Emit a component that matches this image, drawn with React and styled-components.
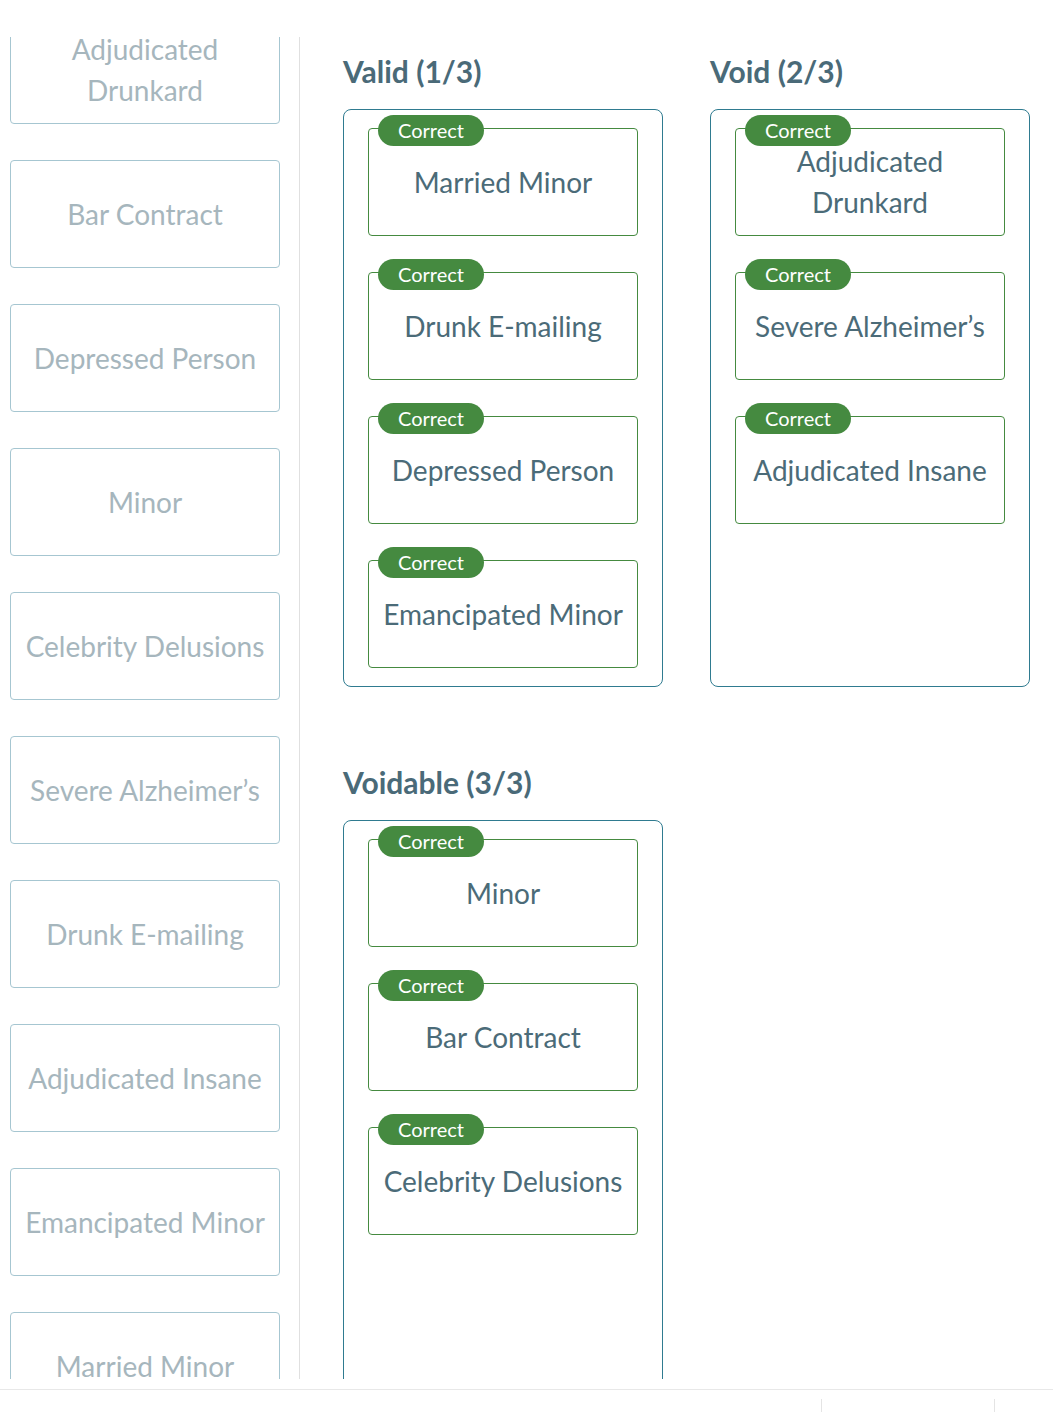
import React, { useLayoutEffect, useRef } from 'react';
import styled, { createGlobalStyle } from 'styled-components';

const GlobalStyle = createGlobalStyle`
  html, body {
    margin: 0;
    padding: 0;
    background: #fff;
    font-family: Lato, "Open Sans", sans-serif;
  }
  * {
    box-sizing: border-box;
  }
`;

const Page = styled.div`
  width: 1053px;
  height: 1412px;
  overflow: hidden;
  padding-top: 37px;
`;

const Workspace = styled.div`
  display: flex;
  height: 1342px;
`;

const Bank = styled.div`
  width: 300px;
  flex-shrink: 0;
  border-right: 1px solid #e0e0e0;
  overflow-y: auto;
  scrollbar-width: none;
  padding: 15px 0;
  display: flex;
  flex-direction: column;
  gap: 36px;

  &::-webkit-scrollbar {
    display: none;
  }
`;

const Chip = styled.div`
  flex-shrink: 0;
  margin-left: 10px;
  width: 270px;
  height: 108px;
  border: 1px solid #a6c6d1;
  border-radius: 4px;
  display: flex;
  align-items: center;
  justify-content: center;
  text-align: center;
  padding: 0 8px;
  font-size: 28px;
  line-height: 41px;
  color: #a6b6bd;
`;

const Board = styled.div`
  flex: 1;
  overflow: hidden;
  padding: 16px 23px 0 43px;
  display: grid;
  grid-template-columns: 320px 320px;
  column-gap: 47px;
  row-gap: 77px;
  align-content: start;
`;

const Category = styled.section`
  display: flex;
  flex-direction: column;
`;

const Title = styled.h2`
  margin: 0 0 20px;
  font-size: 30px;
  line-height: 36px;
  font-weight: 700;
  color: #4a6a78;
`;

const Bucket = styled.div`
  flex: 1;
  min-height: ${p => p.$minHeight || 0}px;
  border: 1px solid #2f7b90;
  border-radius: 8px;
  padding: 18px 24px;
  display: flex;
  flex-direction: column;
  gap: 36px;
`;

const Slot = styled.div`
  position: relative;
  height: 108px;
  border: 1px solid #458a40;
  border-radius: 4px;
  display: flex;
  align-items: center;
  justify-content: center;
  text-align: center;
  padding: 0 8px;
  font-size: 28px;
  line-height: 41px;
  color: #4b6b78;
`;

const Badge = styled.span`
  position: absolute;
  top: -14px;
  left: 9px;
  height: 31px;
  padding: 0 20px;
  border-radius: 16px;
  background: #458a40;
  color: #fff;
  font-size: 20px;
  line-height: 31px;
`;

const Footer = styled.div`
  margin-top: 10px;
  border-top: 1px solid #e8e8e8;
  padding-top: 9px;
  display: flex;
  justify-content: flex-end;
`;

const FooterCell = styled.div`
  width: ${p => p.$width}px;
  height: 30px;
  border-left: 1px solid #e4e4e4;
`;

const bank = [
  'Adjudicated Drunkard',
  'Bar Contract',
  'Depressed Person',
  'Minor',
  'Celebrity Delusions',
  'Severe Alzheimer’s',
  'Drunk E-mailing',
  'Adjudicated Insane',
  'Emancipated Minor',
  'Married Minor',
];

const categories = [
  { name: 'Valid', score: '1/3', items: ['Married Minor', 'Drunk E-mailing', 'Depressed Person', 'Emancipated Minor'] },
  { name: 'Void', score: '2/3', items: ['Adjudicated Drunkard', 'Severe Alzheimer’s', 'Adjudicated Insane'] },
  { name: 'Voidable', score: '3/3', items: ['Minor', 'Bar Contract', 'Celebrity Delusions'], minHeight: 600 },
];

const App = () => {
  const bankRef = useRef(null);

  useLayoutEffect(() => {
    if (bankRef.current) bankRef.current.scrollTop = 36;
  }, []);

  return (
    <>
      <GlobalStyle />
      <Page>
        <Workspace>
          <Bank ref={bankRef}>
            {bank.map(label => (
              <Chip key={label}>{label}</Chip>
            ))}
          </Bank>
          <Board>
            {categories.map(cat => (
              <Category key={cat.name}>
                <Title>{cat.name} ({cat.score})</Title>
                <Bucket $minHeight={cat.minHeight}>
                  {cat.items.map(item => (
                    <Slot key={item}>
                      <Badge>Correct</Badge>
                      {item}
                    </Slot>
                  ))}
                </Bucket>
              </Category>
            ))}
          </Board>
        </Workspace>
        <Footer>
          <FooterCell $width={173} />
          <FooterCell $width={59} />
        </Footer>
      </Page>
    </>
  );
};

export default App;
